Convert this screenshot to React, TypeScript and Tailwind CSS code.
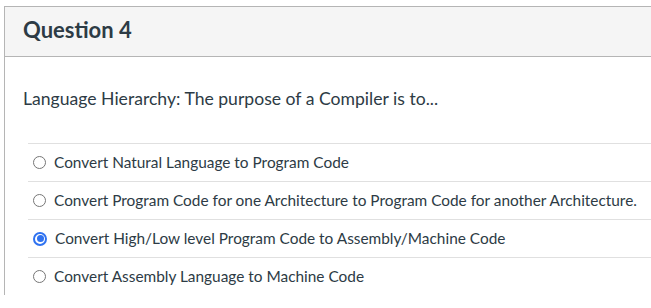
const answers = [
  { text: 'Convert Natural Language to Program Code', checked: false },
  { text: 'Convert Program Code for one Architecture to Program Code for another Architecture.', checked: false },
  { text: 'Convert High/Low level Program Code to Assembly/Machine Code', checked: true },
  { text: 'Convert Assembly Language to Machine Code', checked: false },
]

const Radio = ({ checked }: { checked: boolean }) =>
  checked ? (
    <span className="flex h-[14px] w-[14px] shrink-0 items-center justify-center rounded-full border-2 border-[#2f72f0]">
      <span className="h-[7px] w-[7px] rounded-full bg-[#2f72f0]" />
    </span>
  ) : (
    <span className="h-[13px] w-[13px] shrink-0 rounded-full border border-[#767676]" />
  )

export default function App() {
  return (
    <div className="h-[308px] w-[651px] overflow-hidden bg-white pl-[4px] pt-[6px] font-['Lato','Liberation_Sans',sans-serif] text-[#2d3b45]">
      <div className="w-[700px] border-l border-t border-[#b5b5b5]">
        {/* Header */}
        <div className="flex h-[50px] items-center border-b border-[#b5b5b5] bg-[#f5f5f5] pb-[4px] pl-[18px]">
          <h2 className="text-[22px] font-bold leading-none">Question 4</h2>
        </div>

        {/* Body */}
        <div className="pl-[18px] pt-[30px]">
          <p className="text-[17.6px] leading-[24px]">
            Language Hierarchy: The purpose of a Compiler is to...
          </p>
          <div className="ml-[5px] mt-[32px]">
            {answers.map((a) => (
              <div
                key={a.text}
                className="flex h-[38px] items-center gap-[8px] border-t border-[#e0e0e0] pl-[5px] text-[15.4px]"
              >
                <Radio checked={a.checked} />
                <span>{a.text}</span>
              </div>
            ))}
          </div>
        </div>
      </div>
    </div>
  )
}
